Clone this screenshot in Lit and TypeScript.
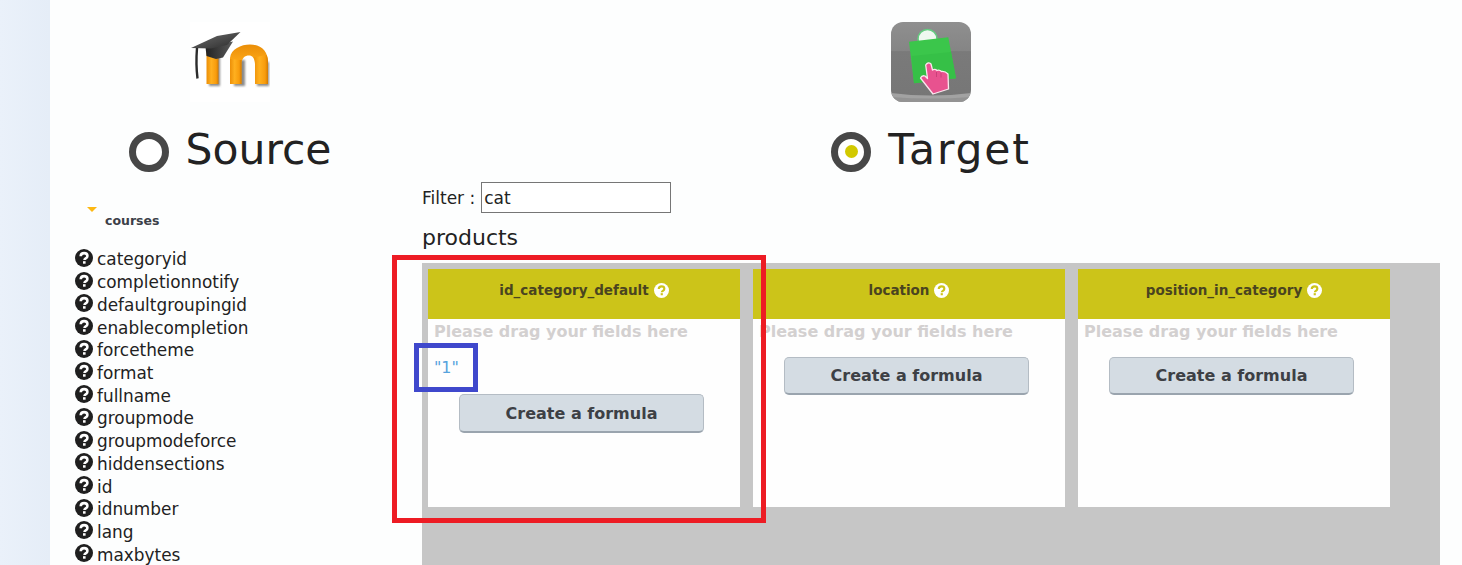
import { LitElement, html, css, svg } from "lit";
import { customElement } from "lit/decorators.js";

const FIELDS = ["categoryid","completionnotify","defaultgroupingid","enablecompletion","forcetheme","format","fullname","groupmode","groupmodeforce","hiddensections","id","idnumber","lang","maxbytes"];
const CARDS = ["id_category_default","location","position_in_category"];

const help = (cls: string) => html`<svg class=${cls} viewBox="0 0 18 18" aria-hidden="true">
  <circle class="disc" cx="9" cy="9" r="9"></circle>
  <path class="mark" d="M5.7 7.2C5.8 5.1 7.3 4.1 9.1 4.1c1.9 0 3.3 1.1 3.3 2.8 0 1.4-.9 2-1.7 2.5-.8.5-1.2.9-1.2 1.7" fill="none" stroke-width="2.6"></path>
  <rect class="dot" x="8" y="12.2" width="2.6" height="2.5"></rect>
</svg>`;

const moodle = svg`<svg width="80" height="80" viewBox="0 0 80 80" aria-hidden="true">
  <defs>
    <linearGradient id="st" x1="0" x2="1" y1="0" y2="0"><stop offset="0" stop-color="#ec8f08"/><stop offset=".4" stop-color="#ffb01f"/><stop offset=".8" stop-color="#f89c0c"/><stop offset="1" stop-color="#d27a02"/></linearGradient>
    <linearGradient id="ar" x1="0" x2="0" y1="0" y2="1"><stop offset="0" stop-color="#ea8e08"/><stop offset=".4" stop-color="#fba516"/><stop offset="1" stop-color="#f29a10"/></linearGradient>
    <linearGradient id="cap" x1="0" x2="1" y1="0" y2="1"><stop offset="0" stop-color="#707070"/><stop offset="1" stop-color="#2a2a2a"/></linearGradient>
    <linearGradient id="sk" x1="0" x2="1" y1="0" y2="0"><stop offset="0" stop-color="#222"/><stop offset="1" stop-color="#5a5a5a"/></linearGradient>
    <filter id="sh" x="-10%" y="-10%" width="120%" height="120%"><feGaussianBlur stdDeviation=".8"/></filter>
  </defs>
  <rect width="80" height="80" fill="#fff"/>
  <path d="M19 64V34H30V64ZM44 64V38H55V64ZM67 64V40H79V64Z" fill="#8a8a8a" filter="url(#sh)"/>
  <path d="M40 62V36C41 27 51 22.5 60 22.5C71 22.5 78 29 78 40V62H65V42C65 36 62 33.5 59 33.5C55 33.5 51.5 36 51.5 42V62Z" fill="url(#ar)"/>
  <path d="M65 62V42C65 39 64.6 37 63.5 35.5L76.5 33C77.5 35 78 37.5 78 40V62Z" fill="url(#st)"/>
  <path d="M40 62V37L51.5 38V62Z" fill="url(#st)"/>
  <path d="M16.5 62V30L28.5 30V62Z" fill="url(#st)"/>
  <path d="M15.5 25L43 19.5L33 35.5L26 37L16.5 34Z" fill="url(#sk)"/>
  <path d="M1 26L27 14L50.5 10L37 23L21 26.5Z" fill="url(#cap)"/>
  <path d="M7 26C6.2 36 6.2 46 7.5 56.5" stroke="#2c2c2c" stroke-width="2.4" fill="none"/>
</svg>`;

const bag = svg`<svg width="80" height="80" viewBox="0 0 80 80" aria-hidden="true">
  <defs>
    <linearGradient id="gb" x1="0" x2="0" y1="0" y2="1"><stop offset="0" stop-color="#8f8f8f"/><stop offset=".36" stop-color="#858585"/><stop offset=".37" stop-color="#7a7a7a"/><stop offset="1" stop-color="#767676"/></linearGradient>
    <clipPath id="sq"><rect width="80" height="80" rx="12"/></clipPath>
  </defs>
  <g clip-path="url(#sq)">
    <rect width="80" height="80" fill="url(#gb)"/>
    <path d="M0 71Q40 76 80 71V80H0Z" fill="#a2a2a2"/>
    <path d="M0 75Q40 78 80 75V80H0Z" fill="#939393"/>
  </g>
  <circle cx="36.5" cy="17" r="9.5" fill="#eef8ef" stroke="#64cc80" stroke-width="1.6"/>
  <path d="M18 19.7L57.3 15.3L65 56.3L23 61.3Z" fill="#3bc64b"/>
  <path d="M20.7 34L60 30L65 56.3L23 61.3Z" fill="#36c047"/>
  <path d="M34.7 43Q37 39.5 40 42L41.5 48Q44 46.5 46 48.5Q48.5 47.5 50.5 49.5Q54 49 57 52L57.5 67L42 72L29.5 56Q31 53 34 54L36.5 56.5Z" fill="#e8528f" stroke="#fbe6ee" stroke-width="1.3" stroke-linejoin="round"/>
  <path d="M45.5 50V55M50 50.5V55.5" stroke="#c23c74" stroke-width=".8"/>
</svg>`;

@customElement("app-root")
export class AppRoot extends LitElement {
  static styles = css`
    :host { display: block; position: relative; width: 1462px; height: 565px; overflow: hidden;
      background: #fdfefe; font-family: "DejaVu Sans", sans-serif; color: #222; }
    .page { display: flex; height: 565px; }
    .rail { width: 50px; flex: none; background: linear-gradient(90deg, #eaf1fa, #e5edf7); }
    .source { width: 360px; flex: none; margin-right: 12px; }
    .target { width: 1018px; flex: none; }
    .logo { display: flex; justify-content: center; padding-top: 22px; height: 80px; }
    .heading { display: flex; justify-content: center; align-items: center; gap: 17px; height: 50px; margin-top: 22px;
      font-size: 42.5px; font-weight: 400; color: #222; }
    .wide { letter-spacing: 1.8px; }
    .radio { width: 40px; height: 40px; box-sizing: border-box; border: 7.5px solid #474747; border-radius: 50%;
      display: flex; align-items: center; justify-content: center; background: #fff; margin-top: 5px; }
    .radio i { width: 13px; height: 13px; border-radius: 50%; background: #d2c900; display: block; }
    .tree { padding: 0 0 0 25px; }
    .root { position: relative; padding-left: 30px; font-size: 12.5px; font-weight: 700; color: #3c4048; height: 18px; line-height: 18px; margin-top: 38px; }
    .root::before { content: ""; position: absolute; left: 12px; top: -5px; border: 5px solid transparent; border-top: 5px solid #fdb813; border-bottom: 0; }
    ul { list-style: none; margin: 18px 0 0; padding: 0; }
    li { display: flex; align-items: center; gap: 4px; height: 22.72px; font-size: 16.9px; color: #222; }
    .q { width: 18px; height: 18px; flex: none; margin-top: -3px; }
    .q .disc { fill: #1f1f1f; } .q .mark { stroke: #fff; } .q .dot { fill: #fff; }
    .filter { display: flex; align-items: center; gap: 6px; height: 31px; margin-top: 8px; font-size: 17px; }
    .filter input { width: 190px; height: 31px; box-sizing: border-box; border: 1px solid #767676; padding: 0 2px;
      font: 17px "DejaVu Sans", sans-serif; color: #222; background: #fff; outline: none; border-radius: 0; }
    h2 { font-size: 22px; font-weight: 400; margin: 0; height: 50px; line-height: 50px; color: #222; }
    .board { background: #c6c6c6; height: 302px; padding: 6px; box-sizing: border-box; display: flex; gap: 13px; align-items: flex-start; }
    .card { width: 312px; height: 238px; background: #fefefe; flex: none; }
    .card header { height: 50px; background: #ccc419; display: flex; align-items: center; justify-content: center; gap: 5px;
      font-size: 13.5px; font-weight: 700; color: #4a4420; padding-bottom: 8px; box-sizing: border-box; }
    .h { width: 15px; height: 15px; flex: none; }
    .h .disc { fill: #fff; } .h .mark { stroke: #ccc419; } .h .dot { fill: #ccc419; }
    .hint { font-size: 16px; font-weight: 700; color: #d3d0d0; padding-left: 6px; height: 26px; line-height: 26px; white-space: nowrap; }
    .value { color: #57a3dd; font-size: 16px; padding-left: 6px; height: 38px; line-height: 46px; }
    .btn { display: block; width: 245px; height: 38px; margin: 12px 0 0 31px; box-sizing: border-box; background: #d4dce3;
      border: 1px solid #b4bcc4; border-bottom: 2px solid #9aa4ae; border-radius: 5px; font: 700 16px "DejaVu Sans", sans-serif; color: #3d4045; padding: 0; }
    .value + .btn { margin-top: 11px; height: 39px; }
    .red, .blue { position: absolute; box-sizing: border-box; pointer-events: none; }
    .red { left: 392px; top: 255px; width: 374px; height: 268px; border: 5px solid #ed1c24; }
    .blue { left: 414px; top: 343px; width: 64px; height: 49px; border: 5px solid #3f48cc; }
  `;

  render() {
    return html`
      <div class="page">
        <div class="rail"></div>
        <section class="source">
          <div class="logo">${moodle}</div>
          <div class="heading"><span class="radio"></span><span>Source</span></div>
          <div class="tree">
            <div class="root">courses</div>
            <ul>${FIELDS.map((f) => html`<li>${help("q")}<span>${f}</span></li>`)}</ul>
          </div>
        </section>
        <section class="target">
          <div class="logo">${bag}</div>
          <div class="heading"><span class="radio"><i></i></span><span class="wide">Target</span></div>
          <div class="filter"><label>Filter :</label><input value="cat" /></div>
          <h2>products</h2>
          <div class="board">
            ${CARDS.map((c, i) => html`<article class="card">
              <header><span>${c}</span>${help("h")}</header>
              <div class="hint">Please drag your fields here</div>
              ${i === 0 ? html`<div class="value">"1"</div>` : ""}
              <button class="btn">Create a formula</button>
            </article>`)}
          </div>
        </section>
      </div>
      <div class="red"></div>
      <div class="blue"></div>
    `;
  }
}
